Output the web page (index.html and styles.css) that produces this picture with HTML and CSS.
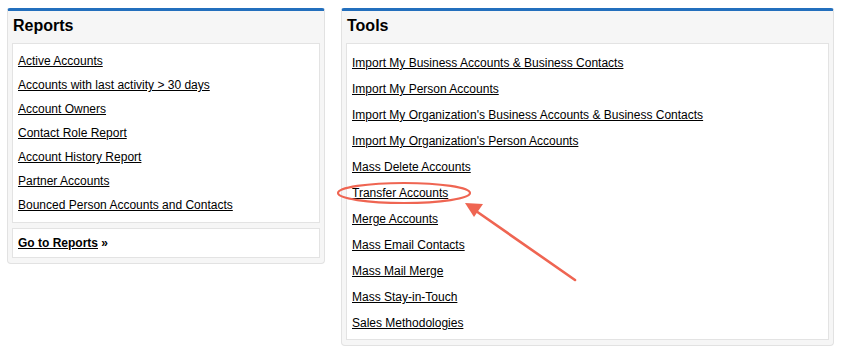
FILE: index.html
```html
<!DOCTYPE html>
<html lang="en">
<head>
  <meta charset="UTF-8">
  <title>Accounts - Reports and Tools</title>
  <link rel="stylesheet" href="styles.css">
</head>
<body>

  <div class="page">
    <!-- Reports panel -->
    <div class="panel reports">
      <h2 class="panel-title">Reports</h2>
      <div class="panel-body">
        <a href="#">Active Accounts</a>
        <a href="#">Accounts with last activity &gt; 30 days</a>
        <a href="#">Account Owners</a>
        <a href="#">Contact Role Report</a>
        <a href="#">Account History Report</a>
        <a href="#">Partner Accounts</a>
        <a href="#">Bounced Person Accounts and Contacts</a>
      </div>
      <div class="panel-footer">
        <a href="#">Go to Reports</a> &raquo;
      </div>
    </div>

    <!-- Tools panel -->
    <div class="panel tools">
      <h2 class="panel-title">Tools</h2>
      <div class="panel-body">
        <a href="#">Import My Business Accounts &amp; Business Contacts</a>
        <a href="#">Import My Person Accounts</a>
        <a href="#">Import My Organization's Business Accounts &amp; Business Contacts</a>
        <a href="#">Import My Organization's Person Accounts</a>
        <a href="#">Mass Delete Accounts</a>
        <a href="#">Transfer Accounts</a>
        <a href="#">Merge Accounts</a>
        <a href="#">Mass Email Contacts</a>
        <a href="#">Mass Mail Merge</a>
        <a href="#">Mass Stay-in-Touch</a>
        <a href="#">Sales Methodologies</a>
      </div>
    </div>
  </div>

  <!-- Annotation drawn over the screenshot -->
  <svg class="annotation" width="846" height="358" viewBox="0 0 846 358">
    <ellipse cx="404" cy="193" rx="66" ry="10" fill="none" stroke="#ef6552" stroke-width="2.2"/>
    <line x1="575" y1="280" x2="476" y2="211" stroke="#ef6552" stroke-width="2.6" stroke-linecap="round"/>
    <polygon points="465,203 483,204 474,217" fill="#ef6552"/>
  </svg>

</body>
</html>
```

FILE: styles.css
```css
/* Reset and basic styles */
* {
  margin: 0;
  padding: 0;
  box-sizing: border-box;
}

body {
  background: #fff;
  font-family: "Liberation Sans", Arial, sans-serif;
  font-size: 12px;
  color: #000;
  position: relative;
}

.page {
  display: flex;
  align-items: flex-start;
  gap: 16px;
  padding: 8px 7px;
}

/* Panels */
.panel {
  background: #f6f6f6;
  border: 1px solid #e2e2e2;
  border-top: 3px solid #236fbd;
  border-radius: 3px 3px 4px 4px;
  padding: 0 4px 5px;
}

.reports { width: 318px; }
.tools { width: 493px; }

.panel-title {
  height: 32px;
  line-height: 30px;
  font-size: 16px;
  font-weight: bold;
  padding-left: 1px;
}

.panel-body {
  background: #fff;
  border: 1px solid #e3e3e3;
  padding: 5px 5px 5px;
  display: flex;
  flex-direction: column;
  align-items: flex-start;
}

.panel-body a {
  color: #000;
  text-decoration: underline;
  line-height: 24px;
}

.tools .panel-body {
  padding-top: 6px;
  padding-bottom: 3px;
}

.tools .panel-body a {
  line-height: 26px;
}

.panel-footer {
  background: #fff;
  border: 1px solid #e3e3e3;
  margin-top: 5px;
  height: 30px;
  line-height: 28px;
  padding: 0 5px;
  font-weight: bold;
}

.panel-footer a {
  color: #000;
}

/* Annotation overlay */
.annotation {
  position: absolute;
  top: 0;
  left: 0;
  pointer-events: none;
}
```
